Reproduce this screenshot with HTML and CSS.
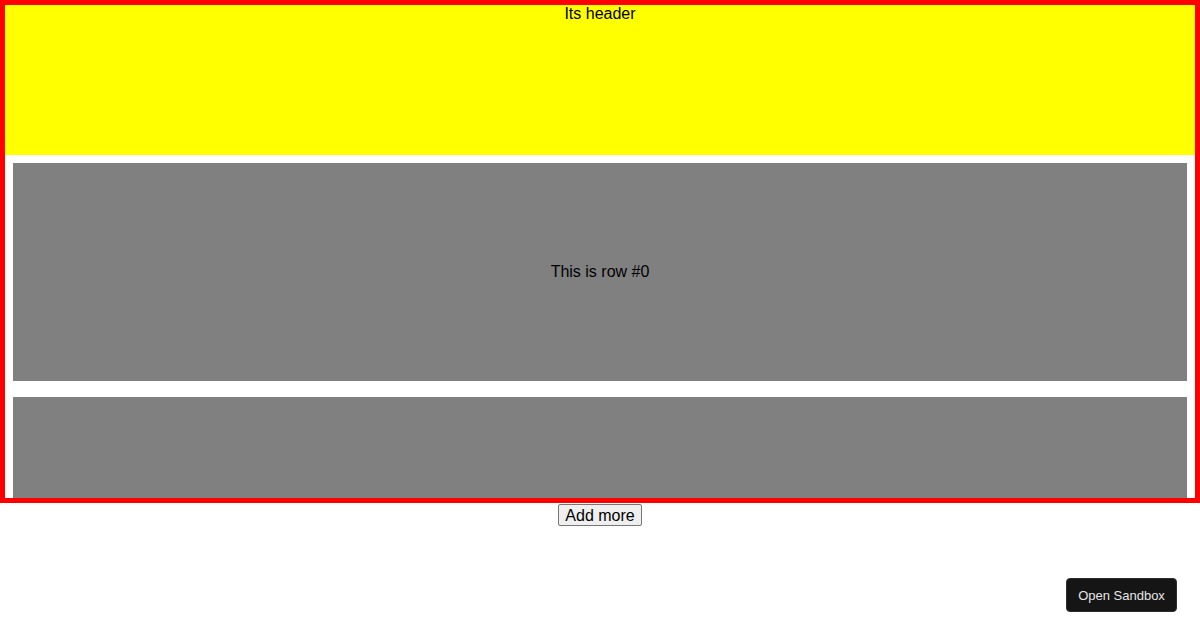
FILE: index.html
```html
<!DOCTYPE html>
<html>
<head>
<meta charset="utf-8">
<link rel="stylesheet" href="styles.css">
</head>
<body>
<div class="frame">
  <div class="header">Its header</div>
  <div class="rows">
    <div class="row">This is row #0</div>
    <div class="row">This is row #1</div>
  </div>
</div>
<div class="actions"><button class="add">Add more</button></div>
<a class="sandbox">Open Sandbox</a>
</body>
</html>
```
FILE: styles.css
```css
html, body {
  margin: 0;
  padding: 0;
  background: #ffffff;
  font-family: "Liberation Sans", Arial, sans-serif;
  font-size: 16px;
  color: #000;
}
.frame {
  box-sizing: border-box;
  height: 503px;
  border: 5px solid #ff0000;
  overflow: hidden;
  display: flex;
  flex-direction: column;
}
.header {
  flex: 0 0 150px;
  background: #ffff00;
  text-align: center;
  line-height: 18px;
}
.rows {
  display: flex;
  flex-direction: column;
  gap: 16px;
  padding: 8px;
}
.row {
  flex: 0 0 218px;
  background: #808080;
  display: flex;
  align-items: center;
  justify-content: center;
}
.actions {
  display: flex;
  justify-content: center;
  padding-top: 1px;
}
.add {
  font-family: "Liberation Sans", Arial, sans-serif;
  font-size: 16px;
  line-height: 18px;
  padding: 2px 6px 0 6px;
  margin: 0;
  border: 1px solid #767676;
  border-radius: 2px;
  background: #efefef;
  color: #000;
}
.sandbox {
  position: fixed;
  right: 23px;
  bottom: 18px;
  box-sizing: border-box;
  width: 111px;
  height: 34px;
  display: flex;
  align-items: center;
  justify-content: center;
  background: #151515;
  border: 1px solid #2e2e2e;
  border-radius: 4px;
  color: #e6e6e6;
  font-family: "Liberation Sans", Arial, sans-serif;
  font-size: 13px;
}
```
